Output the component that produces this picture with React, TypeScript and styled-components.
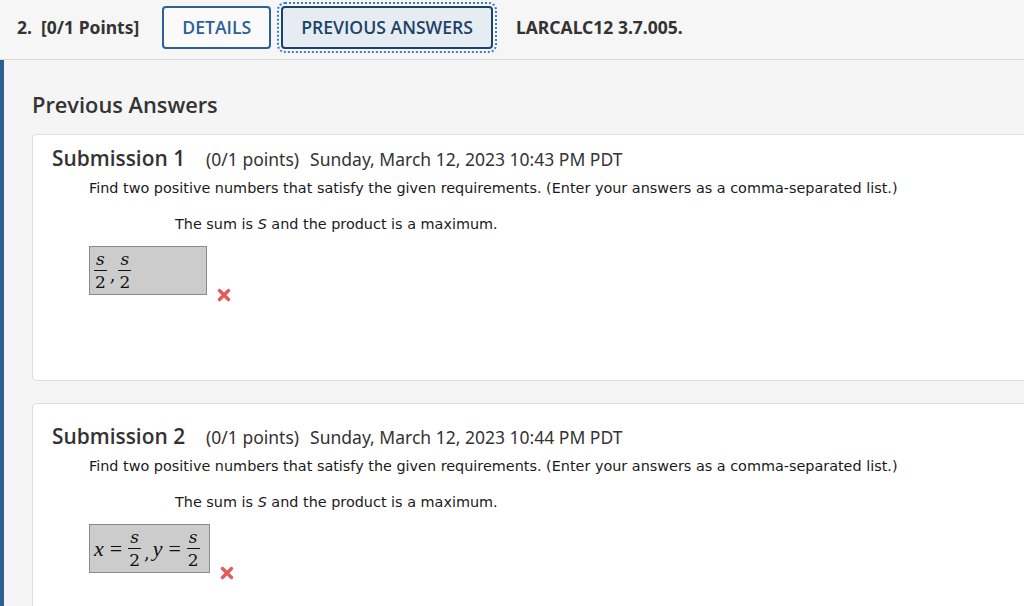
import React from 'react';
import styled, { createGlobalStyle } from 'styled-components';

const GlobalStyle = createGlobalStyle`
  html, body {
    margin: 0;
    padding: 0;
    background: #f5f5f5;
    overflow: hidden;
  }
  body {
    font-family: "Noto Sans", "Open Sans", sans-serif;
    color: #333;
  }
`;

const Page = styled.div`
  width: 1024px;
  height: 606px;
  overflow: hidden;
  background: #f5f5f5;
`;

const TopBar = styled.header`
  box-sizing: border-box;
  display: flex;
  align-items: center;
  height: 60px;
  padding: 0 0 5px 17px;
  border-bottom: 1px solid #dcdcdc;
  background: #f6f6f6;
  gap: 23px;
`;

const BarLabel = styled.span`
  font-size: 17.5px;
  font-weight: 700;
  color: #333;
  white-space: pre;
`;

const TabGroup = styled.div`
  display: flex;
  gap: 10px;
`;

const TabButton = styled.button<{ $active?: boolean }>`
  height: 43px;
  padding: 0 18px;
  border: 2px solid ${(p) => (p.$active ? '#1d4268' : '#2c6096')};
  border-radius: 4px;
  background: ${(p) => (p.$active ? '#e6edf2' : '#fafafa')};
  color: ${(p) => (p.$active ? '#1d4268' : '#2c6096')};
  font-family: "Open Sans", "Noto Sans", sans-serif;
  font-size: 17.6px;
  font-weight: 600;
  outline: ${(p) => (p.$active ? '2px dotted #3a7be0' : 'none')};
  outline-offset: 2px;
`;

const Main = styled.main`
  border-left: 4px solid #2d5f93;
  padding: 30px 0 0 28px;
  min-height: 560px;
`;

const Heading = styled.h2`
  margin: 0 0 15px;
  font-family: "Open Sans", "Noto Sans", sans-serif;
  font-size: 21.8px;
  line-height: 29px;
  font-weight: 600;
  color: #333;
`;

const Card = styled.section<{ $top: number; $bottom: number }>`
  margin-right: -20px;
  margin-bottom: 22px;
  padding: ${(p) => p.$top}px 20px ${(p) => p.$bottom}px 19px;
  background: #fff;
  border: 1px solid #dfdfdf;
  border-radius: 4px;
`;

const SubHeader = styled.div`
  display: flex;
  align-items: baseline;
  line-height: 28px;
`;

const SubTitle = styled.span`
  font-family: "Open Sans", "Noto Sans", sans-serif;
  font-size: 20.9px;
  font-weight: 600;
  color: #333;
  margin-right: 21px;
`;

const SubMeta = styled.span`
  font-size: 17.5px;
  color: #333;
  margin-right: 11px;
`;

const Body = styled.div`
  padding-left: 37px;
  font-family: "DejaVu Sans", Verdana, sans-serif;
  font-size: 14.4px;
  line-height: 20px;
  color: #1a1a1a;
`;

const Question = styled.p`
  margin: 5px 0 0;
`;

const Requirement = styled.p`
  margin: 16px 0 0 86px;
  em {
    font-style: italic;
  }
`;

const AnswerRow = styled.div`
  display: flex;
  align-items: flex-end;
  gap: 10px;
  margin-top: 12px;
`;

const AnswerBox = styled.div<{ $w: number }>`
  display: flex;
  align-items: center;
  box-sizing: border-box;
  width: ${(p) => p.$w}px;
  height: 49px;
  padding: 0 3px;
  background: #cccccc;
  border: 1px solid #8a8a8a;
  font-family: "DejaVu Serif", "Liberation Serif", serif;
  color: #111;
`;

const Frac = styled.span`
  display: inline-flex;
  flex-direction: column;
  align-items: center;
  font-size: 17px;
  line-height: 17px;
  margin: 0 1px;
`;

const Num = styled.span`
  font-style: italic;
  padding: 0 2px 2px;
  border-bottom: 1.2px solid #111;
`;

const Den = styled.span`
  padding-top: 3px;
`;

const Sym = styled.span<{ $italic?: boolean }>`
  font-size: 22px;
  font-style: ${(p) => (p.$italic ? 'italic' : 'normal')};
  font-family: "Liberation Serif", serif;
  margin: 0 ${(p) => (p.$italic ? '1px' : '5px')};
`;

const Comma = styled.span`
  font-size: 18px;
  align-self: center;
  margin: 8px 2px 0;
`;

const Mark = styled.svg`
  flex: none;
  margin-bottom: -7px;
`;

const Cross = () => (
  <Mark width="14" height="14" viewBox="0 0 14 14">
    <path d="M2.5 2.5 L11.5 11.5 M11.5 2.5 L2.5 11.5" stroke="#e25a5a" strokeWidth="3.4" strokeLinecap="round" />
  </Mark>
);

const Half = () => (
  <Frac>
    <Num>s</Num>
    <Den>2</Den>
  </Frac>
);

type Submission = {
  n: number;
  time: string;
  top: number;
  bottom: number;
  width: number;
  answer: React.ReactNode;
};

const submissions: Submission[] = [
  {
    n: 1,
    time: 'Sunday, March 12, 2023 10:43 PM PDT',
    top: 9,
    bottom: 85,
    width: 118,
    answer: (
      <>
        <Half />
        <Comma>,</Comma>
        <Half />
      </>
    ),
  },
  {
    n: 2,
    time: 'Sunday, March 12, 2023 10:44 PM PDT',
    top: 18,
    bottom: 85,
    width: 121,
    answer: (
      <>
        <Sym $italic>x</Sym>
        <Sym>=</Sym>
        <Half />
        <Comma>,</Comma>
        <Sym $italic>y</Sym>
        <Sym>=</Sym>
        <Half />
      </>
    ),
  },
];

export default function App() {
  return (
    <Page>
      <GlobalStyle />
      <TopBar>
        <BarLabel>2.  [0/1 Points]</BarLabel>
        <TabGroup>
          <TabButton>DETAILS</TabButton>
          <TabButton $active>PREVIOUS ANSWERS</TabButton>
        </TabGroup>
        <BarLabel>LARCALC12 3.7.005.</BarLabel>
      </TopBar>
      <Main>
        <Heading>Previous Answers</Heading>
        {submissions.map((s) => (
          <Card key={s.n} $top={s.top} $bottom={s.bottom}>
            <SubHeader>
              <SubTitle>Submission {s.n}</SubTitle>
              <SubMeta>(0/1 points)</SubMeta>
              <SubMeta>{s.time}</SubMeta>
            </SubHeader>
            <Body>
              <Question>
                Find two positive numbers that satisfy the given requirements. (Enter your answers as a comma-separated list.)
              </Question>
              <Requirement>
                The sum is <em>S</em> and the product is a maximum.
              </Requirement>
              <AnswerRow>
                <AnswerBox $w={s.width}>{s.answer}</AnswerBox>
                <Cross />
              </AnswerRow>
            </Body>
          </Card>
        ))}
      </Main>
    </Page>
  );
}
